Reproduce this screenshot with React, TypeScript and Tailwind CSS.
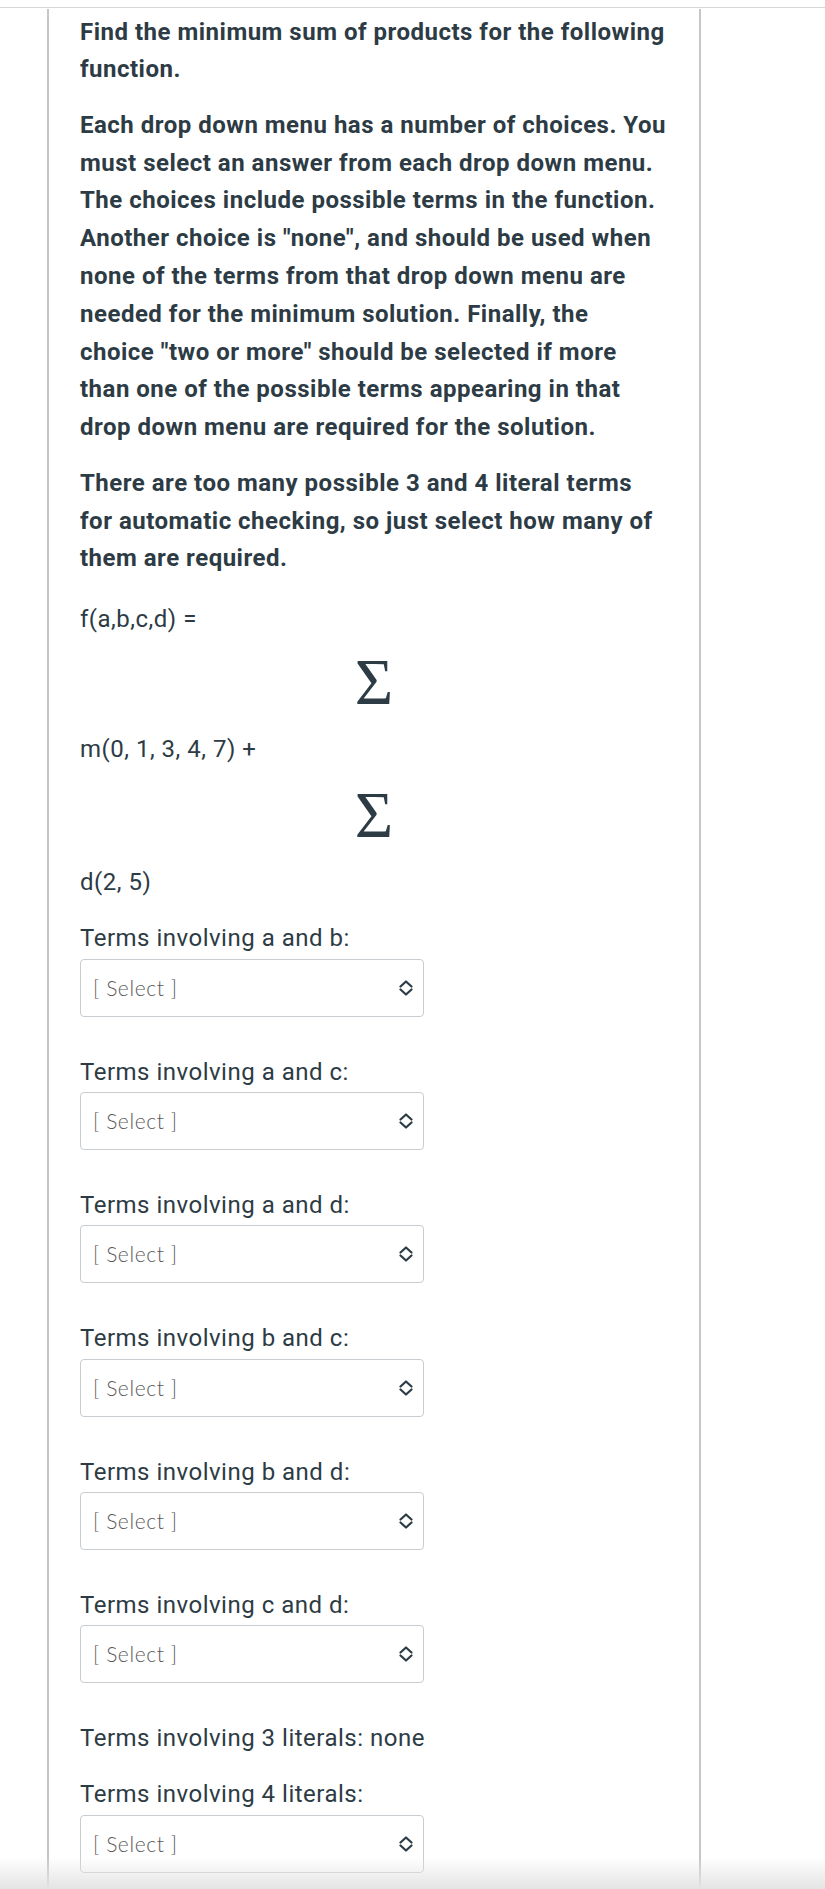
import React from 'react'

function Chevrons() {
  return (
    <svg width="14" height="16" viewBox="0 0 14 16" fill="none" stroke="#2d3b45" strokeWidth="2.2" strokeLinecap="round" strokeLinejoin="round">
      <path d="M1.5 6.5 L7 1.5 L12.5 6.5" />
      <path d="M1.5 9.5 L7 14.5 L12.5 9.5" />
    </svg>
  )
}

function SelectBox() {
  return (
    <div className="mt-[4.5px] flex h-[58px] w-[344px] items-center justify-between rounded-[4px] border border-[#c7cdd1] bg-white pl-[12px] pr-[10px]">
      <span className="font-['Lato',sans-serif] text-[21px] font-light tracking-[0.6px] text-[#5a5a5a]">[ Select ]</span>
      <Chevrons />
    </div>
  )
}

export default function App() {
  const pairs = ['a and b', 'a and c', 'a and d', 'b and c', 'b and d', 'c and d']

  return (
    <div className="relative min-h-[1889px] overflow-hidden bg-white font-['Roboto',sans-serif] text-[#2d3b45]">
      <div className="h-[7px]" />
      <div className="h-px bg-[#d6d6d6]" />

      <div className="ml-[47px] mt-px min-h-[1880px] w-[654px] border-x-2 border-[#c6c6c6] px-[31px] pt-[4.6px]">
        {/* question text */}
        <p className="mb-[17.7px] whitespace-nowrap text-[24px] font-bold leading-[37.8px] tracking-[0.5px]">
          Find the minimum sum of products for the following
          <br />
          function.
        </p>
        <p className="mb-[17.7px] whitespace-nowrap text-[24px] font-bold leading-[37.8px] tracking-[0.5px]">
          Each drop down menu has a number of choices. You
          <br />
          must select an answer from each drop down menu.
          <br />
          The choices include possible terms in the function.
          <br />
          Another choice is "none", and should be used when
          <br />
          none of the terms from that drop down menu are
          <br />
          needed for the minimum solution. Finally, the
          <br />
          choice "two or more" should be selected if more
          <br />
          than one of the possible terms appearing in that
          <br />
          drop down menu are required for the solution.
        </p>
        <p className="mb-[24.6px] whitespace-nowrap text-[24px] font-bold leading-[37.8px] tracking-[0.5px]">
          There are too many possible 3 and 4 literal terms
          <br />
          for automatic checking, so just select how many of
          <br />
          them are required.
        </p>

        {/* function */}
        <div className="text-[24px] leading-[32px] tracking-[0.5px]">
          <p className="mb-[13.9px]">f(a,b,c,d) =</p>
          <div className="mb-[18.1px] text-center font-['Liberation_Serif',serif] text-[66px] leading-[66px] tracking-normal">Σ</div>
          <p className="mb-[16.9px]">m(0, 1, 3, 4, 7) +</p>
          <div className="mb-[18.1px] text-center font-['Liberation_Serif',serif] text-[66px] leading-[66px] tracking-normal">Σ</div>
          <p className="mb-[24.7px]">d(2, 5)</p>

          {/* dropdowns */}
          {pairs.map(p => (
            <div key={p} className="mb-[38.8px]">
              <p>Terms involving {p}:</p>
              <SelectBox />
            </div>
          ))}

          <p className="mb-[24px]">Terms involving 3 literals: none</p>
          <div>
            <p>Terms involving 4 literals:</p>
            <SelectBox />
          </div>
        </div>
      </div>

      {/* bottom fade */}
      <div className="pointer-events-none absolute inset-x-0 bottom-0 h-[32px] bg-linear-to-b from-[#e6e6e6]/0 to-[#e4e4e4]" />
    </div>
  )
}
